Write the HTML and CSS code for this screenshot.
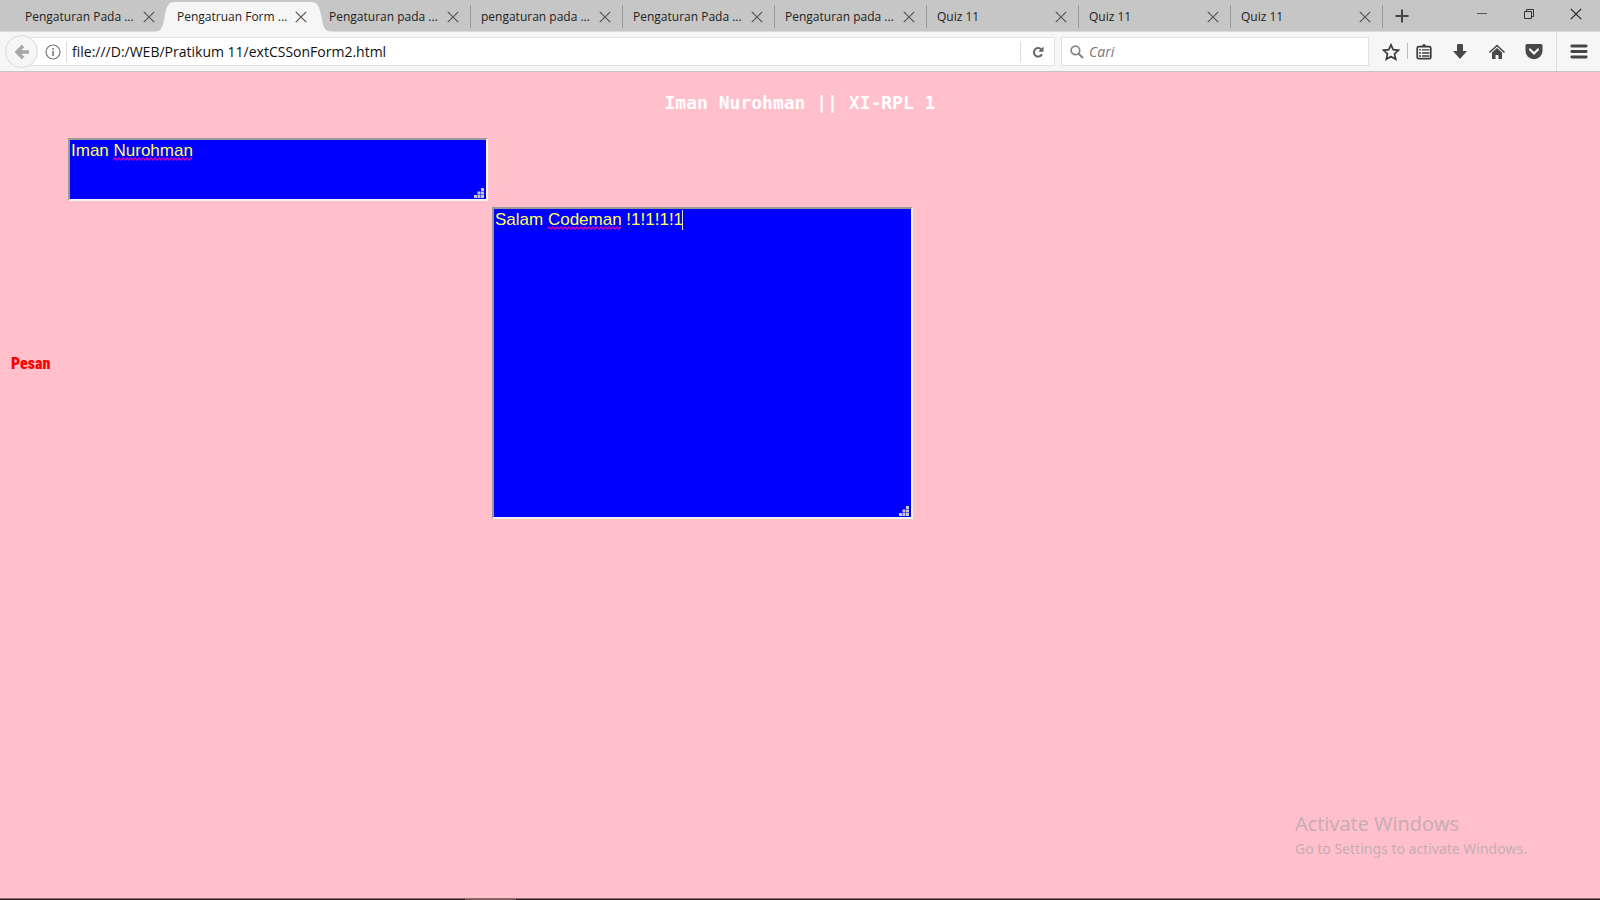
FILE: index.html
```html
<!DOCTYPE html>
<html lang="id">
<head>
<meta charset="utf-8">
<title>Pengatruan Form</title>
<link rel="stylesheet" href="styles.css">
</head>
<body>
<svg class="defs" aria-hidden="true">
  <symbol id="x" viewBox="0 0 12 12"><path d="M.8.8l10.4 10.4M11.2.8L.8 11.2" fill="none" stroke="currentColor" stroke-width="1.2"/></symbol>
  <symbol id="grip" viewBox="0 0 10 10"><path d="M7 0h3v3H7zM3.500 3.500h3v3h-3zM7 3.500h3v3H7zM0 7h3v3H0zM3.500 7h3v3h-3zM7 7h3v3H7z" fill="#c8c8c8"/></symbol>
  <symbol id="curve" viewBox="0 0 20 30"><path d="M0 30C8 29 8 22 10 13C12 4 13 0 20 0V30Z" fill="#f6f6f6"/></symbol>
  <symbol id="wave"><path d="M0 3l2-2 2 2 2-2 2 2 2-2 2 2 2-2 2 2 2-2 2 2 2-2 2 2 2-2 2 2 2-2 2 2 2-2 2 2 2-2 2 2 2-2 2 2 2-2 2 2 2-2 2 2 2-2 2 2 2-2 2 2 2-2 2 2 2-2 2 2 2-2 2 2 2-2 2 2 2-2 2 2" fill="none" stroke="#d000b0" stroke-width="1.300"/></symbol>
</svg>
<header class="browser">
  <nav class="tabs" aria-label="Tab">
    <div class="tab"><a href="#">Pengaturan Pada ...</a><button aria-label="Tutup tab"><svg><use href="#x"/></svg></button></div>
    <div class="tab active"><svg class="edge left"><use href="#curve"/></svg><a href="#">Pengatruan Form ...</a><button aria-label="Tutup tab"><svg><use href="#x"/></svg></button><svg class="edge right"><use href="#curve"/></svg></div>
    <div class="tab line"><a href="#">Pengaturan pada ...</a><button aria-label="Tutup tab"><svg><use href="#x"/></svg></button></div>
    <div class="tab line"><a href="#">pengaturan pada ...</a><button aria-label="Tutup tab"><svg><use href="#x"/></svg></button></div>
    <div class="tab line"><a href="#">Pengaturan Pada ...</a><button aria-label="Tutup tab"><svg><use href="#x"/></svg></button></div>
    <div class="tab line"><a href="#">Pengaturan pada ...</a><button aria-label="Tutup tab"><svg><use href="#x"/></svg></button></div>
    <div class="tab line"><a href="#">Quiz 11</a><button aria-label="Tutup tab"><svg><use href="#x"/></svg></button></div>
    <div class="tab line"><a href="#">Quiz 11</a><button aria-label="Tutup tab"><svg><use href="#x"/></svg></button></div>
    <div class="tab line"><a href="#">Quiz 11</a><button aria-label="Tutup tab"><svg><use href="#x"/></svg></button></div>
    <button class="new" aria-label="Tab baru"><svg viewBox="0 0 14 14"><path d="M7 .5v13M.5 7h13" stroke="#444" stroke-width="2"/></svg></button>
    <div class="window">
      <button aria-label="Minimalkan"><svg viewBox="0 0 12 12"><path d="M1 5.500h10" stroke="#555"/></svg></button>
      <button aria-label="Pulihkan"><svg viewBox="0 0 12 12"><path d="M1.500 3.500h7v7h-7zM3.500 3.500v-2h7v7h-2" fill="none" stroke="#333"/></svg></button>
      <button aria-label="Tutup"><svg><use href="#x"/></svg></button>
    </div>
  </nav>
  <div class="toolbar">
    <button class="back" aria-label="Kembali"><svg viewBox="0 0 16 16"><path d="M9 2L3 8l6 6M3 8h12" fill="none" stroke="#a6a6a6" stroke-width="3.500"/></svg></button>
    <div class="field url">
      <svg class="info" viewBox="0 0 16 16"><circle cx="8" cy="8" r="7" fill="none" stroke="#777" stroke-width="1.200"/><path d="M8 7v5M8 4v1.700" stroke="#777" stroke-width="1.600"/></svg>
      <input type="text" aria-label="Alamat" value="file:///D:/WEB/Pratikum 11/extCSSonForm2.html">
      <button class="reload" aria-label="Muat ulang"><svg viewBox="0 0 12 12"><path d="M9.200 3.200A4.300 4.300 0 1 0 10 8.200" fill="none" stroke="#666" stroke-width="2"/><path d="M11.500.5v5.200H6.300z" fill="#666"/></svg></button>
    </div>
    <div class="field search">
      <svg viewBox="0 0 14 14"><circle cx="5.400" cy="5.400" r="4.300" fill="none" stroke="#888" stroke-width="1.700"/><path d="M8.500 8.500l4.500 4.500" stroke="#888" stroke-width="2.200"/></svg>
      <input type="text" aria-label="Cari" placeholder="Cari">
    </div>
    <div class="tools">
      <button class="star" aria-label="Markah"><svg viewBox="0 0 18 18"><path d="M9 1.800l2.200 4.900 5.300.6-4 3.600 1.200 5.300L9 13.400l-4.700 2.800 1.200-5.300-4-3.600 5.300-.6z" fill="none" stroke="#3c3c3c" stroke-width="1.700"/></svg></button>
      <button class="ruled" aria-label="Daftar markah"><svg viewBox="0 0 18 18"><path d="M6 3.500L9 .8l3 2.700z" fill="#3c3c3c"/><rect x="2.200" y="3.700" width="13.600" height="12" rx="1.500" fill="none" stroke="#3c3c3c" stroke-width="1.700"/><path d="M4 6.800h2M7 6.800h7.500M4 10h2M7 10h7.500M4 13h2M7 13h7.500" stroke="#3c3c3c" stroke-width="1.300"/></svg></button>
      <button aria-label="Unduhan"><svg viewBox="0 0 18 18"><path d="M6 2q0-1 1-1h4q1 0 1 1v6h4L9 16 2 8h4z" fill="#484848"/></svg></button>
      <button aria-label="Beranda"><svg viewBox="0 0 18 18"><path d="M1.500 9.500L9 2.500l7.500 7" fill="none" stroke="#484848" stroke-width="1.600"/><path d="M4 9.500l5-4.500 5 4.500V16h-3.500v-4h-3v4H4z" fill="#484848"/></svg></button>
      <button aria-label="Pocket"><svg viewBox="0 0 18 18"><path d="M2 1h14q1.500 0 1.500 1.500V8a8.500 8.200 0 0 1-17 0V2.500Q.5 1 2 1z" fill="#484848"/><path d="M5 6.500l4 4 4-4" fill="none" stroke="#f6f6f6" stroke-width="2.200" stroke-linecap="round"/></svg></button>
      <button class="menu" aria-label="Menu"><svg viewBox="0 0 18 18"><path d="M1.800 3h14.400M1.800 8.500h14.400M1.800 14h14.400" stroke="#444" stroke-width="2.800" stroke-linecap="round"/></svg></button>
    </div>
  </div>
</header>
<main>
  <h1>Iman Nurohman || XI-RPL 1</h1>
  <form>
    <label for="pesan">Pesan</label>
    <div class="area name">
      <textarea aria-label="Nama" spellcheck="false">Iman Nurohman</textarea>
      <svg class="wave" aria-hidden="true"><use href="#wave"/></svg>
      <svg class="grip"><use href="#grip"/></svg>
    </div>
    <div class="area message">
      <textarea id="pesan" spellcheck="false">Salam Codeman !1!1!1!1</textarea>
      <svg class="wave" aria-hidden="true"><use href="#wave"/></svg>
      <i class="caret"></i>
      <svg class="grip"><use href="#grip"/></svg>
    </div>
  </form>
  <aside><p class="activate">Activate Windows</p><p>Go to Settings to activate Windows.</p></aside>
</main>
<footer><span></span></footer>
</body>
</html>
```
FILE: styles.css
```css
* { box-sizing: border-box; }
body {
  margin: 0;
  min-height: 100vh;
  display: flex;
  flex-direction: column;
  background: #ffc0cb;
  font-family: "Open Sans", "Noto Sans", sans-serif;
}
button { border: 0; padding: 0; background: none; display: grid; place-items: center; color: #555; }
svg { display: block; }
.defs { position: absolute; width: 0; height: 0; }

.tabs { display: flex; height: 32px; padding-left: 15px; background: #c6c6c6; border-bottom: 1px solid #dcdcdc; }
.tab { position: relative; flex: 0 1 152px; display: flex; align-items: center; padding: 3px 12px 0 10px; }
.tab a { flex: 1; color: #222; font-size: 12px; line-height: 20px; text-decoration: none; white-space: nowrap; }
.tab button, .tab button svg { width: 12px; height: 12px; }
.tab a, .tab button { position: relative; z-index: 1; }
.tab.line::after { content: ""; position: absolute; right: 0; top: 5px; bottom: 3px; width: 1px; background: #999; }
.tab.active { margin-bottom: -1px; padding-bottom: 1px; }
.tab.active::before { content: ""; position: absolute; top: 2px; bottom: 0; left: 8px; right: 8px; background: #f6f6f6; }
.edge { position: absolute; top: 2px; width: 20px; height: 30px; }
.left { left: -12px; }
.right { right: -12px; transform: scaleX(-1); }
.new { width: 38px; }
.new svg { width: 14px; height: 14px; }
.window { margin-left: auto; display: flex; height: 28px; padding-right: 1px; }
.window button { width: 47px; color: #222; }
.window svg { width: 12px; height: 12px; }

.toolbar { display: flex; align-items: center; height: 40px; padding-left: 5px; background: #f6f6f6; border-bottom: 1px solid #c8c4c4; }
.back { position: relative; z-index: 1; width: 33px; height: 33px; border: 1px solid #d8d8d8; border-radius: 50%; background: #f6f6f6; }
.back svg { width: 16px; height: 16px; }
.field { display: flex; align-items: center; height: 29px; background: #fff; border: 1px solid #e4e4e4; }
.field input { flex: 1; min-width: 0; border: 0; padding: 0; outline: 0; background: none; font-family: inherit; font-size: 14px; color: #111; }
.url { flex: 1; margin-left: -8px; padding-left: 14px; }
.info { width: 16px; height: 16px; margin-right: 5px; }
.field.url input { border-left: 1px solid #ddd; padding-left: 5px; height: 20px; }
.reload { width: 34px; height: 20px; border-left: 1px solid #ddd; }
.reload svg { width: 12px; height: 12px; }
.search { width: 308px; margin-left: 6px; padding-left: 8px; gap: 5px; }
.search svg { width: 14px; height: 14px; }
.search input::placeholder { font-style: italic; color: #777; opacity: 1; }
.tools { display: flex; padding-left: 5px; height: 39px; align-items: center; }
.tools button { width: 37px; height: 39px; position: relative; }
.tools .star { width: 33px; }
.tools .ruled { width: 34px; }
.tools button svg { width: 18px; height: 18px; }
.ruled::before { content: ""; position: absolute; left: 0; top: 11px; height: 16px; width: 1px; background: #bbb; }
.tools .menu { width: 44px; margin-left: 4px; border-left: 1px solid #ddd; }

main { position: relative; flex: 1; }
h1 { margin: 0; padding: 21px 0 25px; text-align: center; color: #fff; font: bold 18px/20px "DejaVu Sans Mono", monospace; }
form { display: grid; grid-template-columns: 56px 420px 421px; column-gap: 4px; row-gap: 6px; padding-left: 8px; }
label { grid-row: 2; align-self: center; padding: 2px 0 0 3px; color: red; font: 900 16px/20px Impact, "Roboto Condensed", Roboto, sans-serif; }
.area { position: relative; }
.name { grid-area: 1 / 2; height: 63px; }
.message { grid-area: 2 / 3; height: 312px; }
textarea { display: block; width: 100%; height: 100%; margin: 0; padding: 1px; border: 2px solid; border-color: #999 #f4f4f4 #f4f4f4 #999; outline: 0; resize: none; background: blue; color: #ff5; font: 17px/20px "Liberation Sans", sans-serif; }
.wave { position: absolute; left: 45px; top: 19px; width: 79px; height: 4px; }
.message .wave { left: 55px; width: 74px; }
.caret { position: absolute; left: 190px; top: 3px; width: 1px; height: 20px; background: #ddd; }
.grip { position: absolute; right: 4px; bottom: 3px; width: 10px; height: 10px; }
aside { position: absolute; right: 68px; bottom: 38px; width: 237px; color: #c6adb1; }
aside p { margin: 0; font-family: "Noto Sans", sans-serif; font-size: 14px; line-height: 22px; white-space: nowrap; }
aside .activate { font-family: "Open Sans", sans-serif; font-size: 20px; line-height: 28px; }
footer { height: 2px; background: #2a1c20; border-top: 1px solid #8f6a71; padding-left: 465px; }
footer span { display: block; width: 51px; height: 1px; background: #77585e; }
```
